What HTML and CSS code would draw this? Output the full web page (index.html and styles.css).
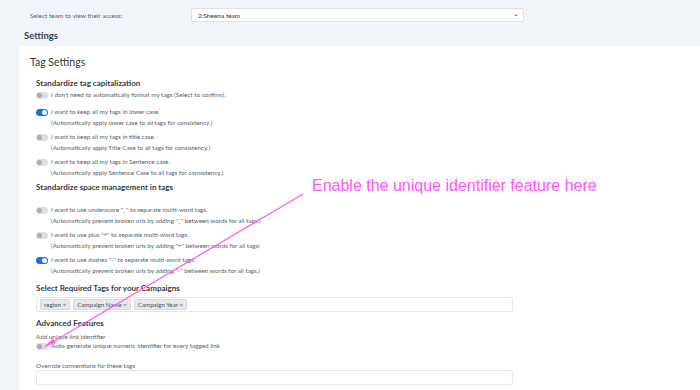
FILE: index.html
```html
<!DOCTYPE html>
<html>
<head>
<meta charset="utf-8">
<link rel="stylesheet" href="styles.css">
</head>
<body>
<div class="topbar">
  <div class="team-label">Select team to view their access:</div>
  <div class="select"><span>2:Sheena team</span><span class="caret">&#8964;</span></div>
</div>
<div class="page-title">Settings</div>
<div class="card">
  <div class="card-title">Tag Settings</div>
  <div class="section">
    <div class="heading h1">Standardize tag capitalization</div>
    <div class="item first"><span class="tog"></span><div class="txt">I don't need to automatically format my tags (Select to confirm).</div></div>
    <div class="item"><span class="tog on"></span><div class="txt">I want to keep all my tags in lower case.<br>(Automatically apply lower case to all tags for consistency.)</div></div>
    <div class="item"><span class="tog"></span><div class="txt">I want to keep all my tags in title case.<br>(Automatically apply Title Case to all tags for consistency.)</div></div>
    <div class="item"><span class="tog"></span><div class="txt">I want to keep all my tags in Sentence case.<br>(Automatically apply Sentence Case to all tags for consistency.)</div></div>
    <div class="heading h2">Standardize space management in tags</div>
    <div class="item"><span class="tog"></span><div class="txt">I want to use underscore "_" to separate multi-word tags.<br>(Automatically prevent broken urls by adding "_" between words for all tags.)</div></div>
    <div class="item"><span class="tog"></span><div class="txt">I want to use plus "+" to separate multi-word tags.<br>(Automatically prevent broken urls by adding "+" between words for all tags)</div></div>
    <div class="item"><span class="tog on"></span><div class="txt">I want to use dashes "-" to separate multi-word tags.<br>(Automatically prevent broken urls by adding "-" between words for all tags.)</div></div>
    <div class="heading h3">Select Required Tags for your Campaigns</div>
    <div class="tagbox">
      <span class="tag">region <b>×</b></span>
      <span class="tag">Campaign Name <b>×</b></span>
      <span class="tag">Campaign Year <b>×</b></span>
    </div>
    <div class="heading h4">Advanced Features</div>
    <div class="label">Add unique link identifier</div>
    <div class="item single"><span class="tog"></span><div class="txt">Auto-generate unique numeric identifier for every tagged link</div></div>
    <div class="label override">Override conventions for these tags</div>
    <div class="input"></div>
  </div>
</div>
<div class="annot">Enable the unique identifier feature here</div>
<svg class="arrow" width="700" height="390" viewBox="0 0 700 390">
  <line x1="303" y1="194" x2="46" y2="346" stroke="#ff5cf4" stroke-width="1.3"/>
  <path d="M44 347 L53 338.5 L55.5 343 Z" fill="#ff5cf4"/>
</svg>
</body>
</html>
```
FILE: styles.css
```css
html, body { margin: 0; padding: 0; }
body {
  width: 700px; height: 390px; overflow: hidden;
  background: #f1f4f9;
  font-family: Lato, "Noto Sans", sans-serif;
  color: #555b66;
  position: relative;
  display: flex; flex-direction: column;
}
.topbar {
  display: flex; align-items: center;
  height: 30px; flex: none;
  padding-left: 30px;
}
.team-label { font-size: 6.5px; color: #5a5f68; width: 161px; }
.select {
  width: 333px; height: 14px; box-sizing: border-box;
  background: #fff; border: 1px solid #dde1e7; border-radius: 2px;
  display: flex; align-items: center; justify-content: space-between;
  padding: 0 4px 0 6px;
  font-size: 6.5px; color: #333;
}
.caret { font-size: 7px; line-height: 7px; margin-top: -4px; color: #444; }
.page-title {
  font-size: 9.5px; font-weight: bold; color: #3a3f47;
  padding-left: 24px; height: 16px; line-height: 12px; flex: none;
}
.card {
  margin-left: 19px;
  background: #fff;
  flex: 1; min-height: 0; overflow: hidden;
  padding: 10px 0 0 11px;
}
.card-title { font-size: 10.5px; color: #333840; line-height: 13px; }
.section { padding-left: 6px; }
.heading { font-size: 8px; font-weight: bold; color: #363b42; line-height: 10px; }
.h1 { margin-top: 9px; }
.h2 { margin-top: 4px; margin-bottom: 13px; }
.h3 { margin-top: 7px; }
.h4 { margin-top: 6px; }
.item { display: flex; align-items: flex-start; margin-bottom: 4px; }
.item.first { margin-bottom: 6.5px; margin-top: 2px; }
.item.single { margin-bottom: 0; }
.tog {
  width: 12px; height: 7px; border-radius: 4px;
  background: #dadde2; position: relative; flex: none;
  margin: 1.8px 3px 0 0;
}
.tog::after {
  content: ""; position: absolute; left: 1px; top: 1px;
  width: 5px; height: 5px; border-radius: 50%; background: #a9adb4;
}
.tog.on { background: #1d6fdc; }
.tog.on::after { left: 6px; background: #fff; }
.txt { font-size: 6.3px; line-height: 10.5px; color: #5b616b; }
.tagbox {
  width: 477px; height: 15px; box-sizing: border-box;
  border: 1px solid #e3e6ea; border-radius: 2px;
  margin-top: 4px;
  display: flex; align-items: center; gap: 3px; padding-left: 3px;
}
.tag {
  background: #e6e8eb; border: 1px solid #d6d9dd; border-radius: 1px;
  font-size: 6.2px; color: #4c525b; padding: 0 3px; line-height: 9px;
}
.tag b { font-weight: normal; font-size: 6px; }
.label { font-size: 6.3px; color: #5b616b; line-height: 9px; margin-top: 4px; }
.override { margin-top: 9px; }
.input {
  width: 477px; height: 15px; box-sizing: border-box;
  border: 1px solid #e3e6ea; border-radius: 2px; margin-top: 0;
}
.annot {
  position: absolute; left: 312px; top: 177px;
  font-family: "Liberation Sans", Arial, sans-serif;
  font-size: 16px; color: #ff55ff; white-space: nowrap;
}
.arrow { position: absolute; left: 0; top: 0; pointer-events: none; }
```
